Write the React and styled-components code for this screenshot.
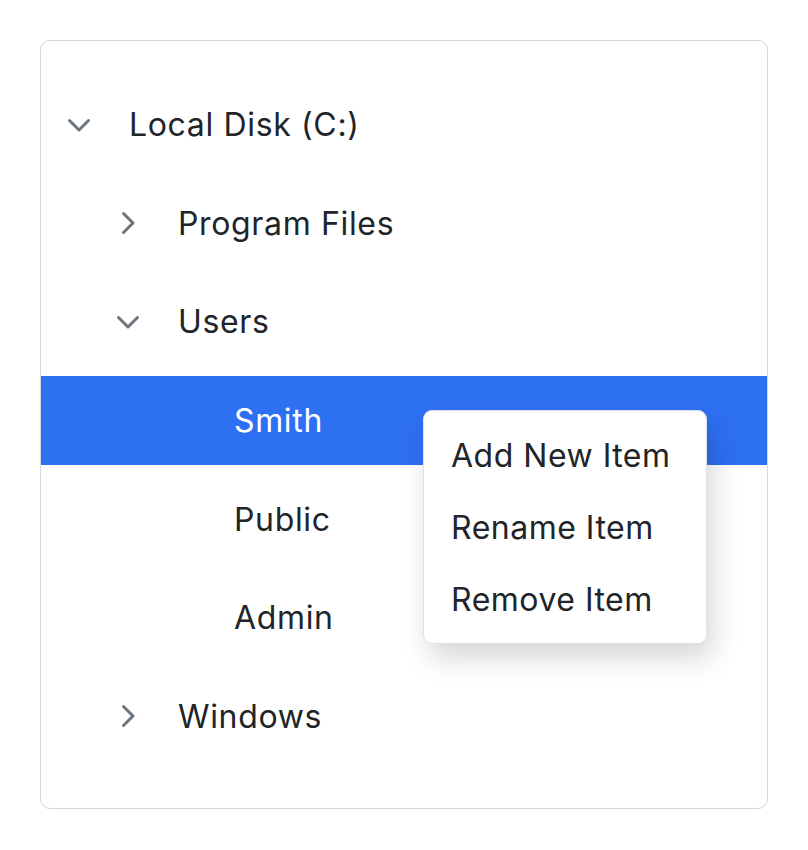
import React from 'react';
import styled, { createGlobalStyle } from 'styled-components';

const GlobalStyle = createGlobalStyle`
  html, body {
    margin: 0;
    padding: 0;
    background: #ffffff;
  }
  body {
    font-family: Inter, "Noto Sans", "Liberation Sans", sans-serif;
    color: #212529;
  }
`;

const Page = styled.div`
  padding: 40px;
`;

const Card = styled.div`
  position: relative;
  width: 728px;
  box-sizing: border-box;
  border: 1.5px solid #d6d6d6;
  border-radius: 10px;
  padding: 39px 0 47px;
`;

const Tree = styled.ul`
  list-style: none;
  margin: 0;
  padding: 0;
  display: flex;
  flex-direction: column;
  gap: 9.67px;
`;

const Row = styled.li`
  display: flex;
  align-items: center;
  height: 89px;
  padding-left: ${p => p.$indent}px;
  background: ${p => (p.$selected ? '#2e70f2' : 'transparent')};
  color: ${p => (p.$selected ? '#ffffff' : '#212529')};
  font-size: 32px;
  letter-spacing: 0.65px;
`;

const Toggle = styled.span`
  display: flex;
  align-items: center;
  justify-content: center;
  width: 26px;
  height: 26px;
  margin-right: 37px;
  color: #6c757d;
`;

const Menu = styled.ul`
  position: absolute;
  left: 382px;
  top: 369px;
  width: 284px;
  box-sizing: border-box;
  list-style: none;
  margin: 0;
  padding: 8px 0;
  background: #ffffff;
  border: 1px solid #dee2e6;
  border-radius: 9px;
  box-shadow: 6px 14px 28px rgba(0, 0, 0, 0.16);
`;

const MenuItem = styled.li`
  display: flex;
  align-items: center;
  height: 72px;
  padding-left: 27px;
  font-size: 32px;
  letter-spacing: 0.5px;
  color: #212529;
`;

function Chevron({ open }) {
  return (
    <svg
      width="26"
      height="26"
      viewBox="0 0 26 26"
      style={{ transform: open ? 'none' : 'rotate(-90deg)' }}
    >
      <polyline
        points="3.5,8.5 13,18 22.5,8.5"
        fill="none"
        stroke="currentColor"
        strokeWidth="3"
        strokeLinecap="round"
        strokeLinejoin="round"
      />
    </svg>
  );
}

const nodes = [
  { label: 'Local Disk (C:)', level: 0, open: true },
  { label: 'Program Files', level: 1, open: false },
  { label: 'Users', level: 1, open: true },
  { label: 'Smith', level: 2, leaf: true, selected: true },
  { label: 'Public', level: 2, leaf: true },
  { label: 'Admin', level: 2, leaf: true },
  { label: 'Windows', level: 1, open: false },
];

export default function App() {
  return (
    <>
      <GlobalStyle />
      <Page>
        <Card>
          <Tree>
            {nodes.map(n => (
              <Row
                key={n.label}
                $indent={n.leaf ? 25 + n.level * 49 + 70 : 25 + n.level * 49}
                $selected={n.selected}
              >
                {!n.leaf && (
                  <Toggle>
                    <Chevron open={n.open} />
                  </Toggle>
                )}
                {n.label}
              </Row>
            ))}
          </Tree>
          <Menu>
            <MenuItem>Add New Item</MenuItem>
            <MenuItem>Rename Item</MenuItem>
            <MenuItem>Remove Item</MenuItem>
          </Menu>
        </Card>
      </Page>
    </>
  );
}
